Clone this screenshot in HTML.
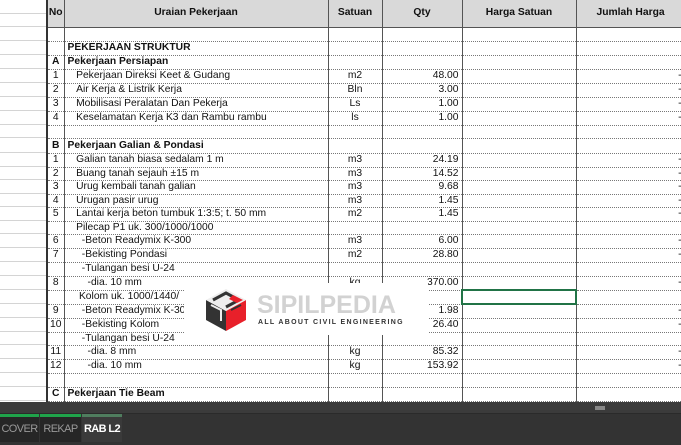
<!DOCTYPE html>
<html><head><meta charset="utf-8"><style>
*{margin:0;padding:0;box-sizing:border-box}
body{width:681px;height:445px;overflow:hidden;background:#fff;font-family:"Liberation Sans","DejaVu Sans",sans-serif;font-size:10.3px;color:#111;position:relative}
.l{position:absolute;left:0;width:46px;height:1px;background:#d4d4d4}
table{position:absolute;left:46px;top:0;border-collapse:collapse;table-layout:fixed;width:700px;border-left:2px solid #333}
td{border-right:1px solid #555;border-bottom:1px dotted #777;padding:0 3px;white-space:nowrap;overflow:hidden;line-height:12px}
tr.h td{background:#d9d9d9;font-weight:bold;text-align:center;border-bottom:1px solid #555;height:27px}
td.n{text-align:center;padding:0}
td.c{text-align:center}
td.r{text-align:right}
td.d{text-align:right;padding-right:65px}
b{font-weight:bold}
.tab{position:absolute;top:414px;height:28px;font-size:11px;text-align:center;line-height:25px;letter-spacing:-0.6px}
</style></head><body>
<div class="l" style="top:13px"></div><div class="l" style="top:26px"></div><div class="l" style="top:40px"></div><div class="l" style="top:54px"></div><div class="l" style="top:68px"></div><div class="l" style="top:82px"></div><div class="l" style="top:96px"></div><div class="l" style="top:110px"></div><div class="l" style="top:124px"></div><div class="l" style="top:137px"></div><div class="l" style="top:152px"></div><div class="l" style="top:166px"></div><div class="l" style="top:179px"></div><div class="l" style="top:193px"></div><div class="l" style="top:206px"></div><div class="l" style="top:220px"></div><div class="l" style="top:233px"></div><div class="l" style="top:247px"></div><div class="l" style="top:261px"></div><div class="l" style="top:275px"></div><div class="l" style="top:289px"></div><div class="l" style="top:303px"></div><div class="l" style="top:317px"></div><div class="l" style="top:331px"></div><div class="l" style="top:344px"></div><div class="l" style="top:358px"></div><div class="l" style="top:372px"></div><div class="l" style="top:386px"></div><div class="l" style="top:400px"></div>
<table>
<colgroup><col style="width:17px"><col style="width:264px"><col style="width:54px"><col style="width:80px"><col style="width:114px"><col style="width:171px"></colgroup>
<tr class="h"><td class="n">No</td><td>Uraian Pekerjaan</td><td>Satuan</td><td>Qty</td><td>Harga Satuan</td><td style="text-align:left;padding-left:20px">Jumlah Harga</td></tr>
<tr style="height:14px"><td></td><td></td><td></td><td></td><td></td><td></td></tr>
<tr style="height:14px"><td></td><td><b>PEKERJAAN STRUKTUR</b></td><td></td><td></td><td></td><td></td></tr>
<tr style="height:14px"><td class="n"><b>A</b></td><td><b>Pekerjaan Persiapan</b></td><td></td><td></td><td></td><td></td></tr>
<tr style="height:14px"><td class="n">1</td><td>&nbsp;&nbsp;&nbsp;Pekerjaan Direksi Keet &amp; Gudang</td><td class="c">m2</td><td class="r">48.00</td><td></td><td class="d">-</td></tr>
<tr style="height:14px"><td class="n">2</td><td>&nbsp;&nbsp;&nbsp;Air Kerja &amp; Listrik Kerja</td><td class="c">Bln</td><td class="r">3.00</td><td></td><td class="d">-</td></tr>
<tr style="height:14px"><td class="n">3</td><td>&nbsp;&nbsp;&nbsp;Mobilisasi Peralatan Dan Pekerja</td><td class="c">Ls</td><td class="r">1.00</td><td></td><td class="d">-</td></tr>
<tr style="height:14px"><td class="n">4</td><td>&nbsp;&nbsp;&nbsp;Keselamatan Kerja K3 dan Rambu rambu</td><td class="c">ls</td><td class="r">1.00</td><td></td><td class="d">-</td></tr>
<tr style="height:13px"><td></td><td></td><td></td><td></td><td></td><td></td></tr>
<tr style="height:15px"><td class="n"><b>B</b></td><td><b>Pekerjaan Galian &amp; Pondasi</b></td><td></td><td></td><td></td><td></td></tr>
<tr style="height:14px"><td class="n">1</td><td>&nbsp;&nbsp;&nbsp;Galian tanah biasa sedalam 1 m</td><td class="c">m3</td><td class="r">24.19</td><td></td><td class="d">-</td></tr>
<tr style="height:13px"><td class="n">2</td><td>&nbsp;&nbsp;&nbsp;Buang tanah sejauh ±15 m</td><td class="c">m3</td><td class="r">14.52</td><td></td><td class="d">-</td></tr>
<tr style="height:14px"><td class="n">3</td><td>&nbsp;&nbsp;&nbsp;Urug kembali tanah galian</td><td class="c">m3</td><td class="r">9.68</td><td></td><td class="d">-</td></tr>
<tr style="height:13px"><td class="n">4</td><td>&nbsp;&nbsp;&nbsp;Urugan pasir urug</td><td class="c">m3</td><td class="r">1.45</td><td></td><td class="d">-</td></tr>
<tr style="height:14px"><td class="n">5</td><td>&nbsp;&nbsp;&nbsp;Lantai kerja beton tumbuk 1:3:5; t. 50 mm</td><td class="c">m2</td><td class="r">1.45</td><td></td><td class="d">-</td></tr>
<tr style="height:13px"><td></td><td>&nbsp;&nbsp;&nbsp;Pilecap P1 uk. 300/1000/1000</td><td></td><td></td><td></td><td></td></tr>
<tr style="height:14px"><td class="n">6</td><td>&nbsp;&nbsp;&nbsp;&nbsp;&nbsp;-Beton Readymix K-300</td><td class="c">m3</td><td class="r">6.00</td><td></td><td class="d">-</td></tr>
<tr style="height:14px"><td class="n">7</td><td>&nbsp;&nbsp;&nbsp;&nbsp;&nbsp;-Bekisting Pondasi</td><td class="c">m2</td><td class="r">28.80</td><td></td><td class="d">-</td></tr>
<tr style="height:14px"><td></td><td>&nbsp;&nbsp;&nbsp;&nbsp;&nbsp;-Tulangan besi U-24</td><td></td><td></td><td></td><td></td></tr>
<tr style="height:14px"><td class="n">8</td><td>&nbsp;&nbsp;&nbsp;&nbsp;&nbsp;&nbsp;&nbsp;-dia. 10 mm</td><td class="c">kg</td><td class="r">370.00</td><td></td><td class="d">-</td></tr>
<tr style="height:14px"><td></td><td>&nbsp;&nbsp;&nbsp;&nbsp;Kolom uk. 1000/1440/</td><td></td><td></td><td style="outline:2px solid #217346;outline-offset:-1px"></td><td></td></tr>
<tr style="height:14px"><td class="n">9</td><td>&nbsp;&nbsp;&nbsp;&nbsp;&nbsp;-Beton Readymix K-30</td><td class="c">m3</td><td class="r">1.98</td><td></td><td class="d">-</td></tr>
<tr style="height:14px"><td class="n">10</td><td>&nbsp;&nbsp;&nbsp;&nbsp;&nbsp;-Bekisting Kolom</td><td class="c">m2</td><td class="r">26.40</td><td></td><td class="d">-</td></tr>
<tr style="height:13px"><td></td><td>&nbsp;&nbsp;&nbsp;&nbsp;&nbsp;-Tulangan besi U-24</td><td></td><td></td><td></td><td></td></tr>
<tr style="height:14px"><td class="n">11</td><td>&nbsp;&nbsp;&nbsp;&nbsp;&nbsp;&nbsp;&nbsp;-dia. 8 mm</td><td class="c">kg</td><td class="r">85.32</td><td></td><td class="d">-</td></tr>
<tr style="height:14px"><td class="n">12</td><td>&nbsp;&nbsp;&nbsp;&nbsp;&nbsp;&nbsp;&nbsp;-dia. 10 mm</td><td class="c">kg</td><td class="r">153.92</td><td></td><td class="d">-</td></tr>
<tr style="height:14px"><td></td><td></td><td></td><td></td><td></td><td></td></tr>
<tr style="height:14px"><td class="n"><b>C</b></td><td><b>Pekerjaan Tie Beam</b></td><td></td><td></td><td></td><td></td></tr>
<tr style="height:14px"><td></td><td></td><td></td><td></td><td></td><td></td></tr>
</table>
<div style="position:absolute;left:184px;top:283px;width:244px;height:52px;background:#fff"></div>
<svg style="position:absolute;left:203px;top:287px" width="46" height="46" viewBox="0 0 46 46">
<polygon points="3,13 23,24 23,44 3,33" fill="#333"/>
<polygon points="23,24 43,13 43,33 23,44" fill="#e8202a"/>
<polygon points="23,2 43,13 23,24 3,13" fill="#eee"/>
<polyline points="10,13 23,6 36,13 23,20" fill="none" stroke="#333" stroke-width="3"/>
<polygon points="30,8 40,13 34,16 26,12" fill="#e8202a"/>
<polyline points="8,18 18,23 18,34" fill="none" stroke="#eee" stroke-width="2"/>
<polyline points="28,23 38,18" fill="none" stroke="#333" stroke-width="2"/>
</svg>
<div style="position:absolute;left:257px;top:292px;font-size:25px;font-weight:bold;color:#d2d2d2;line-height:26px">SIPILPEDIA</div>
<div style="position:absolute;left:258px;top:318px;font-size:7px;font-weight:bold;color:#333;letter-spacing:1.3px;line-height:9px">ALL ABOUT CIVIL ENGINEERING</div>
<div style="position:absolute;left:0;top:402px;width:681px;height:12px;background:#3b3b3b;border-bottom:1px solid #2a2a2a"><div style="position:absolute;left:595px;top:4px;width:10px;height:4px;background:#888"></div></div>
<div style="position:absolute;left:0;top:414px;width:681px;height:31px;background:#333"></div>
<div class="tab" style="left:0;width:39px;background:#262626;border-top:3px solid #1fa34a;color:#999">COVER</div>
<div class="tab" style="left:40px;width:41px;background:#262626;border-top:3px solid #1fa34a;color:#999">REKAP</div>
<div class="tab" style="left:82px;width:40px;background:#3a3a3a;border-top:3px solid #4f7d5e;color:#fff;font-weight:bold">RAB L2</div>
</body></html>
